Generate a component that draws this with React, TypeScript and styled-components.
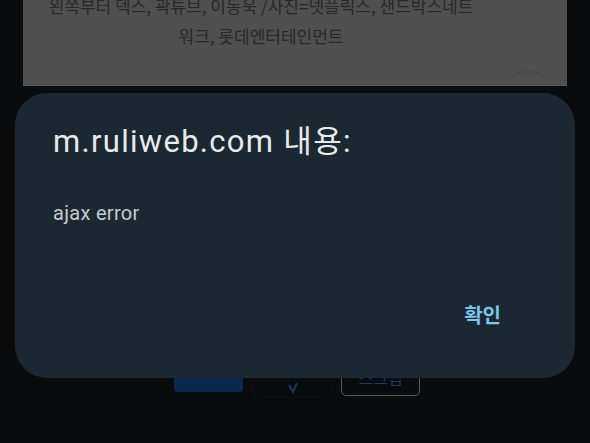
import React, { FC } from 'react'
import styled, { createGlobalStyle } from 'styled-components'

const GlobalStyle = createGlobalStyle`
    html, body {
        margin: 0;
        padding: 0;
        background: #0a0b0d;
        font-family: Roboto, "Noto Sans CJK KR", sans-serif;
    }
`;

const Page = styled.div`
    width: 590px;
    height: 443px;
    overflow: hidden;
    display: flex;
    flex-direction: column;
    align-items: center;
`;

const Caption = styled.div`
    position: relative;
    width: 544px;
    height: 86px;
    overflow: hidden;
    background: #4f4f4f;
    box-sizing: border-box;
    border-bottom: 1px solid #5a5a5a;
    padding-right: 68px;
`;

const CaptionText = styled.p`
    margin: -9px 0 0;
    text-align: center;
    font-family: "Noto Sans CJK KR", sans-serif;
    font-size: 17px;
    line-height: 30px;
    color: #292929;
    white-space: nowrap;
`;

const RoundButton = styled.div`
    position: absolute;
    left: 479px;
    top: 71px;
    width: 50px;
    height: 50px;
    border-radius: 50%;
    border: 1px solid #454545;
`;

const ActionRow = styled.div`
    display: flex;
    align-items: flex-end;
    margin: 272px 0 0 4px;
`;

const PrimaryBtn = styled.div`
    width: 69px;
    height: 34px;
    border-radius: 4px;
    background: #0b2850;
`;

const IconBtn = styled.div`
    width: 80px;
    height: 40px;
    margin: 0 8px -6px 10px;
    border-radius: 8px;
    border: 1px solid #101114;
    display: flex;
    justify-content: center;
    padding-top: 6px;
    box-sizing: border-box;
`;

const OutlineBtn = styled.div`
    width: 79px;
    height: 38px;
    border-radius: 5px;
    border: 1px solid #575757;
    box-sizing: border-box;
    display: flex;
    align-items: center;
    justify-content: center;
    margin-bottom: -4px;
    font-family: "Noto Sans CJK KR", sans-serif;
    font-size: 16px;
    color: #1d3a6a;
`;

const Backdrop = styled.div`
    position: fixed;
    inset: 0;
    display: flex;
    justify-content: center;
    padding-top: 93px;
`;

const Dialog = styled.div`
    width: 560px;
    height: 285px;
    box-sizing: border-box;
    border-radius: 32px;
    background: #1b2832;
    padding: 30px 74px 0 38px;
    display: flex;
    flex-direction: column;
`;

const Title = styled.h2`
    margin: 0;
    font-weight: 400;
    font-size: 31px;
    line-height: 37px;
    letter-spacing: 1.3px;
    color: #e8eaec;
    font-family: Roboto, "Noto Sans CJK KR", sans-serif;
`;

const Message = styled.p`
    margin: 41px 0 0;
    font-size: 20px;
    line-height: 24px;
    letter-spacing: 0.3px;
    color: #c6cbcf;
`;

const Footer = styled.div`
    display: flex;
    justify-content: flex-end;
    margin-top: 78px;
`;

const ConfirmBtn = styled.button`
    border: none;
    background: none;
    padding: 0;
    font-family: "Noto Sans CJK KR", sans-serif;
    font-weight: 700;
    font-size: 20px;
    line-height: 24px;
    color: #7cc4ec;
    cursor: pointer;
`;

interface IAlert {
    host: string;
    message: string;
}

const AlertDialog: FC<IAlert> = (props) => {
    return (
        <Backdrop>
            <Dialog>
                <Title>{props.host} 내용:</Title>
                <Message>{props.message}</Message>
                <Footer>
                    <ConfirmBtn>확인</ConfirmBtn>
                </Footer>
            </Dialog>
        </Backdrop>
    )
}

export default function App() {
    return (
        <>
            <GlobalStyle />
            <Page>
                <Caption>
                    <CaptionText>
                        왼쪽부터 덱스, 곽튜브, 이동욱 /사진=넷플릭스, 샌드박스네트<br />
                        워크, 롯데엔터테인먼트
                    </CaptionText>
                    <RoundButton />
                </Caption>
                <ActionRow>
                    <PrimaryBtn />
                    <IconBtn>
                        <svg width="14" height="30" viewBox="0 0 14 30">
                            <path d="M3 20 L7 27 L11 18" fill="none" stroke="#1b3560" strokeWidth="2" />
                        </svg>
                    </IconBtn>
                    <OutlineBtn>스크랩</OutlineBtn>
                </ActionRow>
            </Page>
            <AlertDialog host="m.ruliweb.com" message="ajax error" />
        </>
    )
}
